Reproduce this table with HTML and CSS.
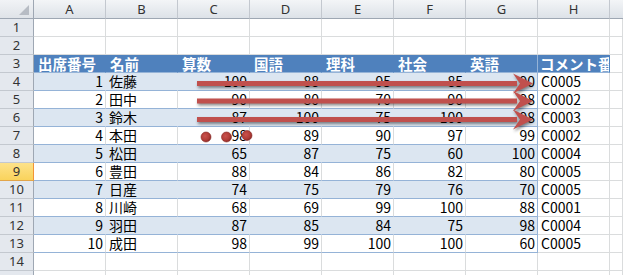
FILE: index.html
```html
<!DOCTYPE html>
<html lang="ja">
<head>
<meta charset="utf-8">
<title>Sheet</title>
<link rel="stylesheet" href="styles.css">
</head>
<body>
<div class="wrap">
<div class="sheet">
  <div class="corner"><span class="tri"></span></div>
  <div class="ch">A</div><div class="ch">B</div><div class="ch">C</div><div class="ch">D</div><div class="ch">E</div><div class="ch">F</div><div class="ch">G</div><div class="ch">H</div><div class="ch last"></div>

  <div class="rh">1</div><div class="c"></div><div class="c"></div><div class="c"></div><div class="c"></div><div class="c"></div><div class="c"></div><div class="c"></div><div class="c"></div><div class="c"></div>
  <div class="rh">2</div><div class="c"></div><div class="c"></div><div class="c"></div><div class="c"></div><div class="c"></div><div class="c"></div><div class="c"></div><div class="c"></div><div class="c"></div>

  <div class="rh">3</div>
  <div class="c th">出席番号</div><div class="c th">名前</div><div class="c th">算数</div><div class="c th">国語</div><div class="c th">理科</div><div class="c th">社会</div><div class="c th end">英語</div><div class="c th hx">コメント番号</div><div class="c"></div>

  <div class="rh">4</div>
  <div class="c b n">1</div><div class="c b t">佐藤</div><div class="c b n">100</div><div class="c b n">88</div><div class="c b n">95</div><div class="c b n">85</div><div class="c b n end">90</div><div class="c t">C0005</div><div class="c"></div>
  <div class="rh">5</div>
  <div class="c w n">2</div><div class="c w t">田中</div><div class="c w n">90</div><div class="c w n">80</div><div class="c w n">70</div><div class="c w n">90</div><div class="c w n end">98</div><div class="c t">C0002</div><div class="c"></div>
  <div class="rh">6</div>
  <div class="c b n">3</div><div class="c b t">鈴木</div><div class="c b n">87</div><div class="c b n">100</div><div class="c b n">75</div><div class="c b n">100</div><div class="c b n end">98</div><div class="c t">C0003</div><div class="c"></div>
  <div class="rh">7</div>
  <div class="c w n">4</div><div class="c w t">本田</div><div class="c w n">98</div><div class="c w n">89</div><div class="c w n">90</div><div class="c w n">97</div><div class="c w n end">99</div><div class="c t">C0002</div><div class="c"></div>
  <div class="rh">8</div>
  <div class="c b n">5</div><div class="c b t">松田</div><div class="c b n">65</div><div class="c b n">87</div><div class="c b n">75</div><div class="c b n">60</div><div class="c b n end">100</div><div class="c t">C0004</div><div class="c"></div>
  <div class="rh sel">9</div>
  <div class="c w n">6</div><div class="c w t">豊田</div><div class="c w n">88</div><div class="c w n">84</div><div class="c w n">86</div><div class="c w n">82</div><div class="c w n end">80</div><div class="c t">C0005</div><div class="c"></div>
  <div class="rh">10</div>
  <div class="c b n">7</div><div class="c b t">日産</div><div class="c b n">74</div><div class="c b n">75</div><div class="c b n">79</div><div class="c b n">76</div><div class="c b n end">70</div><div class="c t">C0005</div><div class="c"></div>
  <div class="rh">11</div>
  <div class="c w n">8</div><div class="c w t">川崎</div><div class="c w n">68</div><div class="c w n">69</div><div class="c w n">99</div><div class="c w n">100</div><div class="c w n end">88</div><div class="c t">C0001</div><div class="c"></div>
  <div class="rh">12</div>
  <div class="c b n">9</div><div class="c b t">羽田</div><div class="c b n">87</div><div class="c b n">85</div><div class="c b n">84</div><div class="c b n">75</div><div class="c b n end">98</div><div class="c t">C0004</div><div class="c"></div>
  <div class="rh">13</div>
  <div class="c w n">10</div><div class="c w t">成田</div><div class="c w n">98</div><div class="c w n">99</div><div class="c w n">100</div><div class="c w n">100</div><div class="c w n end">60</div><div class="c t">C0005</div><div class="c"></div>

  <div class="rh">14</div><div class="c"></div><div class="c"></div><div class="c"></div><div class="c"></div><div class="c"></div><div class="c"></div><div class="c"></div><div class="c"></div><div class="c"></div>
  <div class="rh">15</div><div class="c"></div><div class="c"></div><div class="c"></div><div class="c"></div><div class="c"></div><div class="c"></div><div class="c"></div><div class="c"></div><div class="c"></div>
</div>

<svg class="overlay" width="623" height="275" viewBox="0 0 623 275" xmlns="http://www.w3.org/2000/svg">
  <defs>
    <radialGradient id="dot" cx="0.4" cy="0.4" r="0.6">
      <stop offset="0" stop-color="#c9524d"/>
      <stop offset="0.7" stop-color="#b13c37"/>
      <stop offset="1" stop-color="#8e2b27"/>
    </radialGradient>
  </defs>
  <g class="arrows" fill="#c0504d">
    <rect x="197" y="81" width="320" height="5"/>
    <polygon points="513,73.5 533,83.5 513,93.5 520,83.5"/>
    <rect x="197" y="98.5" width="320" height="5"/>
    <polygon points="513,91 533,101 513,111 520,101"/>
    <rect x="197" y="117" width="320" height="5"/>
    <polygon points="513,109.5 533,119.5 513,129.5 520,119.5"/>
  </g>
  <g class="dots" fill="url(#dot)">
    <circle cx="206" cy="137" r="5"/>
    <circle cx="226.5" cy="137" r="5"/>
    <circle cx="247" cy="135.5" r="5"/>
  </g>
</svg>
</div>
</body>
</html>
```

FILE: styles.css
```css
html, body {
  margin: 0;
  padding: 0;
  background: #ffffff;
}
body {
  width: 623px;
  height: 275px;
  overflow: hidden;
  font-family: "Noto Sans CJK JP", "Noto Sans", sans-serif;
}
.wrap {
  position: relative;
  width: 623px;
  height: 275px;
  overflow: hidden;
}
.sheet {
  display: grid;
  grid-template-columns: 34px repeat(8, 72px) 13px;
  grid-template-rows: 19px;
  grid-auto-rows: 18px;
  width: 623px;
}
.sheet > div {
  box-sizing: border-box;
  white-space: nowrap;
}
.corner {
  background: linear-gradient(#f1f3f6, #dfe3e8);
  border-right: 1px solid #9ea7b3;
  border-bottom: 1px solid #9ea7b3;
  position: relative;
}
.tri {
  position: absolute;
  right: 4px;
  bottom: 3px;
  width: 0;
  height: 0;
  border-left: 10px solid transparent;
  border-bottom: 10px solid #b7bcc4;
}
.ch {
  background: linear-gradient(#f3f5f7, #dde2e8);
  border-right: 1px solid #c3c8cf;
  border-bottom: 1px solid #9ea7b3;
  color: #333;
  font-size: 13px;
  line-height: 18px;
  text-align: center;
  font-family: "Noto Sans", "DejaVu Sans", sans-serif;
}
.ch.last {
  border-right: none;
}
.rh {
  background: #e4e8ee;
  border-right: 1px solid #9ea7b3;
  border-bottom: 1px solid #c3c8cf;
  color: #333;
  font-size: 13px;
  line-height: 17px;
  text-align: center;
  font-family: "Noto Sans", "DejaVu Sans", sans-serif;
}
.rh.sel {
  background: linear-gradient(#fde28a, #f9d35c);
  border-right: 1px solid #f29436;
  border-bottom: 1px solid #e2a54a;
  color: #333;
}
.c {
  border-right: 1px solid #dadcdd;
  border-bottom: 1px solid #dadcdd;
  font-size: 14px;
  line-height: 17px;
  color: #000;
}
.t {
  padding-left: 3px;
  text-align: left;
}
.n {
  padding-right: 2px;
  text-align: right;
}
.th {
  background: #4f81bd;
  color: #fff;
  font-weight: bold;
  font-size: 14.5px;
  padding-left: 4px;
  border-right-color: #4f81bd;
  border-bottom-color: #95b3d7;
}
.th.hx {
  padding-left: 2px;
  overflow: hidden;
  border-right-color: #4f81bd;
}
.b {
  background: #dce6f1;
  border-right-color: #dce6f1;
  border-bottom-color: #95b3d7;
}
.w {
  background: #ffffff;
  border-bottom-color: #95b3d7;
}
.c.end {
  border-right-color: #95b3d7;
}
.overlay {
  position: absolute;
  left: 0;
  top: 0;
  pointer-events: none;
}
.arrows {
  filter: drop-shadow(1.5px 2px 1.5px rgba(0, 0, 0, 0.45));
}
.dots circle {
  stroke: #8a2a26;
  stroke-width: 0.6;
}
```
